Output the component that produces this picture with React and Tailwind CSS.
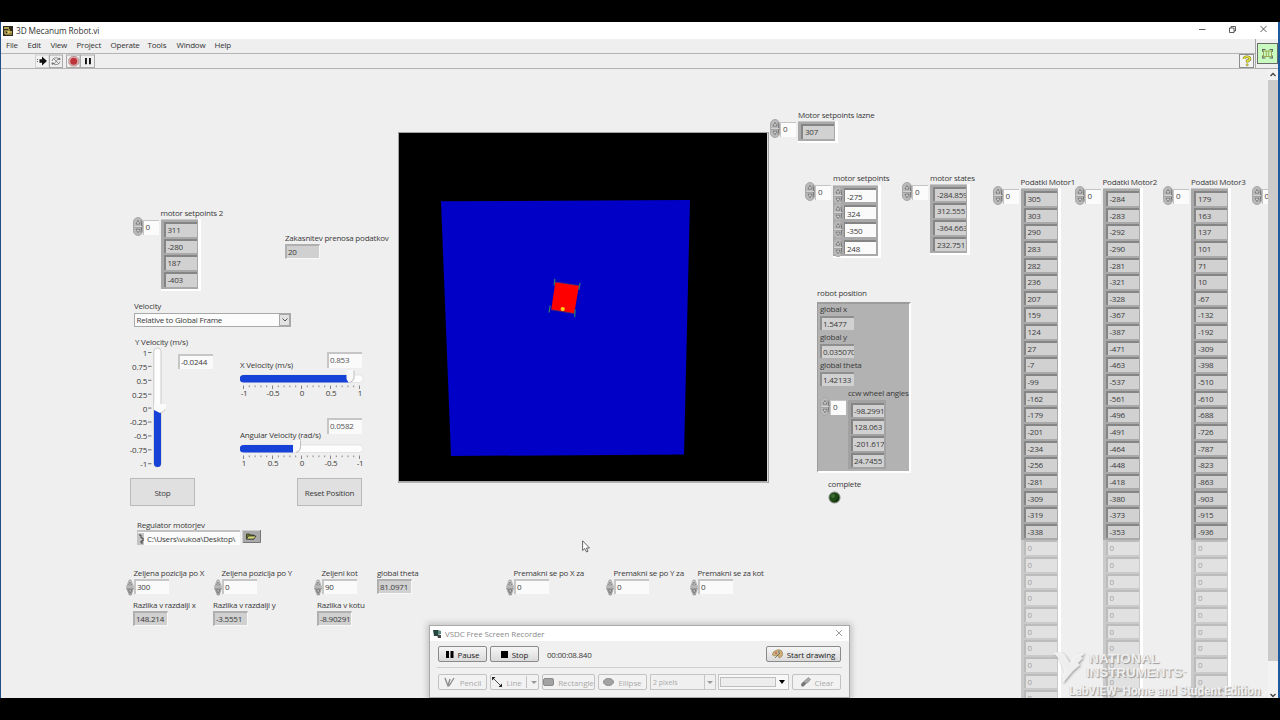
import React from 'react';

const MOTOR1 = ['305', '303', '290', '283', '282', '236', '207', '159', '124', '27', '-7', '-99', '-162', '-179', '-201', '-234', '-256', '-281', '-309', '-319', '-338'];
const MOTOR2 = ['-284', '-283', '-292', '-290', '-281', '-321', '-328', '-367', '-387', '-471', '-463', '-537', '-561', '-496', '-491', '-464', '-448', '-418', '-380', '-373', '-353'];
const MOTOR3 = ['179', '163', '137', '101', '71', '10', '-67', '-132', '-192', '-309', '-398', '-510', '-610', '-688', '-726', '-787', '-823', '-863', '-903', '-915', '-936'];

const Label = ({ children, className = '' }) => (
  <div className={`h-2.5 leading-[10px] whitespace-nowrap ${className}`}>{children}</div>
);

const Oval = ({ className = '' }) => (
  <svg width="10" height="19" viewBox="0 0 10 19" className={`shrink-0 ${className}`}>
    <rect x="0.5" y="0.5" width="9" height="18" rx="4.5" fill="#b9b9b9" stroke="#a8a8a8" />
    <path d="M8 3.5Q9.5 9 8 15.5" stroke="#777" strokeWidth="1" fill="none" />
    <path d="M1 9.5H9" stroke="#e6e6e6" />
    <path d="M1 10.2H9" stroke="#858585" strokeWidth="0.6" />
    <path d="M3 7L5 3.5L7 7Z" fill="#e4e4e4" stroke="#5c5c5c" strokeWidth="0.7" />
    <path d="M3 12.2L5 15.7L7 12.2Z" fill="#e4e4e4" stroke="#5c5c5c" strokeWidth="0.7" />
  </svg>
);

const Arrows = () => (
  <svg width="8" height="17" viewBox="0 0 8 17" className="shrink-0">
    <path d="M0.5 8L3.2 1H5L7.5 8Z" fill="#c9c9c9" stroke="#999" strokeWidth="0.7" />
    <path d="M2.6 6L4 3L5.6 6Z" fill="#eee" stroke="#666" strokeWidth="0.7" />
    <path d="M0.5 9H7.5L5.2 16H3.4Z" fill="#a9a9a9" stroke="#888" strokeWidth="0.7" />
    <path d="M2.4 10.8H5.8L4.2 14Z" fill="#d8d8d8" stroke="#5c5c5c" strokeWidth="0.7" />
  </svg>
);

const Index = ({ className = '' }) => (
  <div className={`flex shrink-0 ${className}`}>
    <Oval />
    <div className="mt-[3px] h-[15px] w-[16px] border-t border-l border-[#c4c4c4] bg-[#fbfbfb] pl-[2px] leading-[12px] text-[#444]">0</div>
  </div>
);

const Box = ({ children, gray, className = '' }) => (
  <div
    className={`h-[15px] w-[35px] overflow-hidden border-t-2 border-l-2 pl-px whitespace-nowrap ${
      gray ? 'border-[#b0b0b0] border-r border-b border-r-[#f8f8f8] border-b-[#f8f8f8] bg-[#d0d0d0] leading-[12px]' : 'border-[#c6c6c6] bg-[#fafafa] leading-[11px]'
    } ${className}`}
  >
    {children}
  </div>
);

const ArrayBox = ({ values, zeros = 0 }) => (
  <div className="w-10 shrink-0 border-r-[3px] border-white">
    <div className="border-t border-[#c8c8c8] bg-[#a9a9a9] pt-[2px] pr-[1px] pl-[3px]">
      {values.map((v, i) => (
        <div key={i} className="h-[16.65px]">
          <div className="h-[14.6px] overflow-hidden border-t-2 border-l-2 border-[#858585] bg-[#d1d1d1] pl-[2px] leading-[12px] text-[#3c3c3c]">{v}</div>
        </div>
      ))}
    </div>
    {zeros === 0 && <div className="-mr-[3px] h-[2px] bg-white" />}
    {zeros > 0 && (
      <div className="bg-[#cacaca] pr-[1px] pl-[3px]">
        {Array.from({ length: zeros }, (_, i) => (
          <div key={i} className="h-[16.65px]">
            <div className="h-[14.6px] border-t-2 border-l-2 border-[#bcbcbc] bg-[#e1e1e1] pl-[2px] leading-[12px] text-[#a2a2a2]">0</div>
          </div>
        ))}
      </div>
    )}
  </div>
);

const ArrayGroup = ({ label, values, zeros, className = '' }) => (
  <div className={`shrink-0 ${className}`}>
    <Label className="pl-[28px]">{label}</Label>
    <div className="flex">
      <Index className="-mt-px w-[28px]" />
      <div className="mt-[1px]">
        <ArrayBox values={values} zeros={zeros} />
      </div>
    </div>
  </div>
);

const Control = ({ label, value, className = '' }) => (
  <div className={`w-[43px] shrink-0 ${className}`}>
    <Label className="pl-[7.5px]">{label}</Label>
    <div className="mt-px flex">
      <Arrows />
      <Box>{value}</Box>
    </div>
  </div>
);

const Indicator = ({ label, value, className = '' }) => (
  <div className={`w-[35px] shrink-0 ${className}`}>
    <Label>{label}</Label>
    <Box gray className="mt-px">{value}</Box>
  </div>
);

const HSlider = ({ label, value, fill, thumb, ticks, boxClass = '', className = '' }) => (
  <div className={`w-[124px] ${className}`}>
    <div className="flex h-[18px]">
      <Label className="mt-[8px] w-[87px] shrink-0">{label}</Label>
      <Box className={`h-[16px] border-[#bdbdbd] bg-[#f5f5f5] text-[#555] ${boxClass}`}>{value}</Box>
    </div>
    <svg width="124" height="20" viewBox="0 0 124 20" className="block">
      <rect x="0" y="5" width="123" height="7.5" rx="3.5" fill="#fdfdfd" stroke="#d8d8d8" strokeWidth="0.6" />
      <path d={`M3.5 5H${fill}V12.5H3.5A3.5 3.5 0 0 1 3.5 5Z`} fill="#1742d8" />
      <path d={`M${thumb} 0H${thumb + 8}V8Q${thumb + 7} 12.5 ${thumb + 2} 12.5L${thumb} 9Z`} fill="#f8f8f8" />
      <path d={`M${thumb + 7.5} 0.5V8Q${thumb + 6.5} 12 ${thumb + 3} 12.5`} fill="none" stroke="#bdbdbd" strokeWidth="1" />
      {Array.from({ length: 21 }, (_, i) => (
        <path key={i} d={`M${3.5 + i * 5.8} 15.5V${i % 5 === 0 ? 19 : 17.2}`} stroke="#6a6a6a" strokeWidth="0.8" />
      ))}
    </svg>
    <div className="-mt-[2px] ml-[4px] flex h-[12px] w-[116px] justify-between">
      {ticks.map((t) => (
        <div key={t} className="flex w-0 justify-center leading-[10px]">{t}</div>
      ))}
    </div>
  </div>
);

const RecButton = ({ children, off, className = '' }) => (
  <div
    className={`flex h-4 items-center justify-center gap-1 rounded-[2px] border ${
      off ? 'border-[#c2c2c2] bg-[#f2f2f2] text-[#ababab]' : 'border-[#8a8a8a] bg-linear-to-b from-[#f6f6f6] to-[#dadada] text-[#222]'
    } ${className}`}
  >
    {children}
  </div>
);

function TitleBar() {
  return (
    <div className="flex h-[17px] items-center bg-white pl-[2px] text-[#333]">
      <svg width="10" height="10" viewBox="0 0 10 10">
        <rect width="10" height="10" fill="#2e2a1c" />
        <path d="M1 1H6V3H1ZM5 5H9V7H5Z" fill="#b3a04c" />
        <path d="M2 4V8H5V5H3M6 3V9M8 7V9" stroke="#f0dc6a" fill="none" />
      </svg>
      <span className="ml-[3px] text-[8.3px] leading-[10px] tracking-[-0.1px]">3D Mecanum Robot.vi</span>
      <svg width="72" height="10" viewBox="0 0 72 10" className="mr-[7px] mb-px ml-auto" fill="none" stroke="#333" strokeWidth="0.8">
        <path d="M0 4.5H6.5" />
        <path d="M30.5 3H35V7.5H30.5ZM32 3V1.5H36.5V6H35" />
        <path d="M61.5 1L67.5 7M67.5 1L61.5 7" />
      </svg>
    </div>
  );
}

function MenuAndToolbar() {
  return (
    <div className="flex h-[30px] bg-[#efefef]">
      <div className="flex-1">
        <div className="flex h-[14px] text-[#333]">
          <span className="w-[21.5px] pl-[5px]">File</span>
          <span className="ml-[5px] w-[23px]">Edit</span>
          <span className="w-[26px]">View</span>
          <span className="w-[34px]">Project</span>
          <span className="w-[37px]">Operate</span>
          <span className="w-[29px]">Tools</span>
          <span className="w-[38px]">Window</span>
          <span>Help</span>
        </div>
        <div className="flex h-4 items-center border-t border-b border-[#b4b4b4]">
          <svg width="62" height="15" viewBox="0 0 62 15" className="ml-[34px]">
            <rect x="0.5" y="1" width="13.5" height="12.5" fill="#f2f2f2" stroke="#d0d0d0" />
            <rect x="14.5" y="1" width="13" height="12.5" fill="#efefef" stroke="#aaa" />
            <rect x="31.5" y="1" width="13.5" height="12.5" fill="#efefef" stroke="#aaa" />
            <rect x="45.5" y="1" width="14" height="12.5" fill="#efefef" stroke="#aaa" />
            <path d="M4.5 5.3H7V2.5L12 7L7 11.5V8.7H4.5Z" fill="#111" />
            <path d="M2.5 5V9" stroke="#666" strokeDasharray="1 1" />
            <path d="M17 7A4 3.6 0 0 1 24 5M25 7.5A4 3.6 0 0 1 18 9.5M18.5 4.5L24 10M19 10L23.5 4.5" stroke="#777" fill="none" strokeWidth="0.8" />
            <path d="M22.5 5.5L25.5 6L25 3.5ZM19.5 9L16.5 8.5L17 11Z" fill="#666" />
            <path d="M36.5 2.5H41L43.8 5V9.5L41 12H36.5L33.8 9.5V5Z" fill="#d8b0b0" stroke="#a77" strokeWidth="0.6" />
            <circle cx="38.7" cy="7.2" r="3.5" fill="#bf343a" />
            <path d="M50 4H51.9V10.2H50ZM54 4H55.9V10.2H54Z" fill="#111" />
          </svg>
          <div className="mr-[1px] ml-auto h-[14px] w-[15px] border border-[#8d8d8d] bg-[#f4f4f4]">
            <svg width="10" height="12" viewBox="0 0 10 12" className="mx-auto block">
              <path d="M2 4Q2 1.8 5 1.8T8 4Q8 5.2 5.2 5.8V7.5" fill="none" stroke="#6b6b20" strokeWidth="2.6" />
              <path d="M2 4Q2 1.8 5 1.8T8 4Q8 5.2 5.2 5.8V7.5" fill="none" stroke="#e8e23c" strokeWidth="1.6" />
              <circle cx="5.2" cy="9.8" r="1.1" fill="#e8e23c" stroke="#6b6b20" strokeWidth="0.5" />
            </svg>
          </div>
        </div>
      </div>
      <div className="w-[23px] border-b border-l border-[#a8a8a8] pt-[4px] pl-px">
        <svg width="21" height="21" viewBox="0 0 21 21" className="block">
          <rect x="0.5" y="0.5" width="20" height="20" fill="#c9fac0" stroke="#6a6a6a" />
          <path d="M6.5 8H14.5V13.5H6.5ZM9.3 8V13.5M11.7 8V13.5" fill="none" stroke="#97a447" strokeWidth="0.9" />
          <path d="M5 6.5H8.5M5 15H8.5M12.5 6.5H16M12.5 15H16M5.7 6.5V9M5.7 12.5V15M15.3 6.5V9M15.3 12.5V15" stroke="#555" strokeWidth="0.9" />
        </svg>
      </div>
    </div>
  );
}

function LeftControls() {
  return (
    <div className="w-[397px] shrink-0">
      <div className="flex h-[232px]">
        <ArrayGroup label="motor setpoints 2" values={['311', '-280', '187', '-403']} className="mt-[139px] ml-[131.5px] w-[68px]" />
        <Indicator label="Zakasnitev prenosa podatkov" value="20" className="mt-[164px] ml-[84.5px]" />
      </div>
      <div className="ml-[133px] w-[157px]">
        <Label>Velocity</Label>
        <div className="mt-[2px] flex h-[14px] border border-[#a9a9a9] bg-[#fcfcfc] pl-[1.5px] leading-[12px]">
          Relative to Global Frame
          <div className="ml-auto flex w-[11px] items-center justify-center border border-[#a8a8a8] bg-[#e2e2e2]">
            <svg width="6" height="4" viewBox="0 0 6 4"><path d="M0.5 0.5L3 3L5.5 0.5" fill="none" stroke="#444" strokeWidth="0.9" /></svg>
          </div>
        </div>
      </div>
      <div className="mt-[10px] ml-[128px] flex h-[141px]">
        <div className="w-[86px]">
          <Label className="pl-[6px]">Y Velocity (m/s)</Label>
          <div className="flex">
            <div className="w-[18px] text-right">
              {['1', '0.75', '0.5', '0.25', '0', '-0.25', '-0.5', '-0.75', '-1'].map((t) => (
                <div key={t} className="flex h-[13.9px] justify-end leading-[11px] whitespace-nowrap">{t}</div>
              ))}
            </div>
            <svg width="20" height="122" viewBox="0 0 20 122" className="shrink-0">
              {Array.from({ length: 9 }, (_, i) => (
                <path key={i} d={`M1 ${5.5 + i * 13.9}H4.5`} stroke="#666" strokeWidth="0.9" />
              ))}
              <rect x="6.8" y="1" width="7.2" height="119" rx="3.6" fill="#fdfdfd" stroke="#b9b9b9" strokeWidth="0.7" />
              <path d="M7 62H14V116.5A3.5 3.5 0 0 1 7 116.5Z" fill="#1742d8" />
              <path d="M7 57H19V62Q17 66 13 66L7 63Z" fill="#fafafa" />
              <path d="M18.5 62Q17 65.5 13 65.8" stroke="#c5c5c5" fill="none" />
            </svg>
            <Box className="mt-[7px] ml-[11px] shrink-0">-0.0244</Box>
          </div>
        </div>
        <div className="ml-[25px] pt-[15px]">
          <HSlider label="X Velocity (m/s)" value="0.853" fill={109} thumb={106.5} ticks={['-1', '-0.5', '0', '0.5', '1']} />
          <HSlider label="Angular Velocity (rad/s)" value="0.0582" fill={53} thumb={53} ticks={['1', '0.5', '0', '-0.5', '-1']} boxClass="-mt-[4px]" className="mt-[22px]" />
        </div>
      </div>
      <div className="ml-[129px] flex w-[232px] justify-between">
        <div className="flex h-7 w-[65px] items-center justify-center border border-[#b9b9b9] bg-[#e0e0e0]">Stop</div>
        <div className="flex h-7 w-[65px] items-center justify-center border border-[#b9b9b9] bg-[#e0e0e0]">Reset Position</div>
      </div>
      <div className="mt-[13.5px] ml-[136px]">
        <Label>Regulator motorjev</Label>
        <div className="mt-[0.5px] flex">
          <div className="flex h-[15px] w-[103px] items-center border-t-2 border-l border-[#c2c2c2] bg-[#fbfbfb]">
            <svg width="6" height="12" viewBox="0 0 6 12" className="mr-[3px] bg-[#c4c4c4]"><path d="M1 2H3V5H5V8H3M3 8V10H5" fill="none" stroke="#333" strokeWidth="0.9" /></svg>
            C:\Users\vukoa\Desktop\
          </div>
          <svg width="19" height="13" viewBox="0 0 19 13" className="-mt-[0.5px] ml-[2px]">
            <rect x="0.5" y="0.5" width="18" height="12" fill="#a9a9a9" stroke="#cfcfcf" />
            <path d="M18.5 0V12.5H1" fill="none" stroke="#777" />
            <path d="M4.5 9V4H7.5L8.5 5H12V9Z" fill="#6f7424" stroke="#222" strokeWidth="0.7" />
            <path d="M4.5 9L6.5 6H14L12 9Z" fill="#d4d976" stroke="#222" strokeWidth="0.7" />
          </svg>
        </div>
      </div>
    </div>
  );
}

function Scene() {
  return (
    <svg width="371" height="351" viewBox="398 132 371 351" className="mt-[63px] shrink-0">
      <rect x="398" y="132" width="371" height="351" fill="#a3a3a3" />
      <rect x="399" y="133" width="368" height="348.5" fill="#000" />
      <path d="M767.5 133V481.8H399" fill="none" stroke="#e8e8e8" strokeWidth="0.8" />
      <path d="M441 201.3L690 200L684 454.5L451 456Z" fill="#0000c6" />
      <path d="M555.3 282.3L579 285.7L574.2 313.4L551.3 309.5Z" fill="#fe0000" />
      <path d="M555 282L579.5 285.7M551 309.7L574.5 313.5" stroke="#6a3a50" strokeWidth="0.7" />
      <path d="M554.8 278.8L554.2 285.5M580.2 282.8L578.8 290M550.2 305.5L549 312.6M575.2 309.5L574.6 317" stroke="#2f7f68" strokeWidth="1.2" />
      <circle cx="562.7" cy="309" r="2.1" fill="#ffd21a" />
    </svg>
  );
}

function BottomControls() {
  return (
    <div className="h-[76px]">
      <div className="flex pl-[125px]">
        <Control label="Zeljena pozicija po X" value="300" />
        <Control label="Zeljena pozicija po Y" value="0" className="ml-[45px]" />
        <Control label="Zeljeni kot" value="90" className="ml-[57px]" />
        <Indicator label="global theta" value="81.0971" className="ml-[20px]" />
        <Control label="Premakni se po X za" value="0" className="ml-[94px]" />
        <Control label="Premakni se po Y za" value="0" className="ml-[57px]" />
        <Control label="Premakni se za kot" value="0" className="ml-[41px]" />
      </div>
      <div className="mt-[4px] flex pl-[132px]">
        <Indicator label="Razlika v razdalji x" value="148.214" />
        <Indicator label="Razlika v razdalji y" value="-3.5551" className="ml-[45px]" />
        <Indicator label="Razlika v kotu" value="-8.90291" className="ml-[69px]" />
      </div>
    </div>
  );
}

function MiddleColumn() {
  return (
    <div className="w-[222px] shrink-0 pt-[41px] pl-[1px]">
      <ArrayGroup label="Motor setpoints lazne" values={['307']} />
      <div className="mt-[30px] flex pl-[35px]">
        <div className="w-[97px]">
          <Label className="pl-[28px]">motor setpoints</Label>
          <div className="flex">
            <Index className="-mt-px w-[28px]" />
            <div className="mt-[2px] w-[48px] border-r-[3px] border-b-2 border-white">
              <div className="border-t border-[#c8c8c8] bg-[#a9a9a9] pt-px">
                {['-275', '324', '-350', '248'].map((v) => (
                  <div key={v} className="flex h-[17.3px]">
                    <Oval className="-mt-px" />
                    <div className="mt-[1px] ml-px h-[14.5px] w-[32px] border-t-2 border-l border-[#858585] bg-[#fafafa] pl-[2px] leading-[13px]">{v}</div>
                  </div>
                ))}
              </div>
            </div>
          </div>
        </div>
        <ArrayGroup label="motor states" values={['-284.859', '312.555', '-364.663', '232.751']} />
      </div>
      <div className="mt-[30px] ml-[47px] w-[94px]">
        <Label>robot position</Label>
        <div className="mt-[4px] h-[171px] border-t-2 border-r-2 border-b-2 border-l border-t-[#9c9c9c] border-r-white border-b-white border-l-[#9c9c9c] bg-[#b2b2b2] pl-[2px]">
          {[['global x', '1.5477'], ['global y', '0.035070'], ['global theta', '1.42133']].map(([l, v]) => (
            <div key={l} className="h-[28px]">
              <Label>{l}</Label>
              <div className="mt-[2px] h-[14px] w-[34px] overflow-hidden border-t-2 border-l-2 border-[#8f8f8f] bg-[#d1d1d1] pl-px leading-[11px]">{v}</div>
            </div>
          ))}
          <Label className="pl-[28px]">ccw wheel angles</Label>
          <div className="flex">
            <Index className="-mt-px w-[28px]" />
            <div className="mt-[2px] w-[38px] bg-[#a2a2a2] pt-[3px] pr-[2px] pl-[3px]">
              {['-98.2991', '128.063', '-201.617', '24.7455'].map((v) => (
                <div key={v} className="h-[16.6px]">
                  <div className="h-[14.6px] overflow-hidden border-t-2 border-l-2 border-[#858585] bg-[#d1d1d1] pl-px leading-[12px] whitespace-nowrap">{v}</div>
                </div>
              ))}
            </div>
          </div>
        </div>
      </div>
      <Label className="mt-[6px] ml-[58px]">complete</Label>
      <svg width="13" height="13" viewBox="0 0 13 13" className="mt-[2px] ml-[58px] block">
        <circle cx="6.5" cy="6.5" r="5.6" fill="#1d4a15" stroke="#9a9a9a" />
        <circle cx="5" cy="5" r="2" fill="#3d6d34" />
        <path d="M10.5 4A5 5 0 0 1 5 11Q10 10 10.5 4Z" fill="#0d2a08" />
      </svg>
    </div>
  );
}

function Watermark() {
  return (
    <div className="absolute top-[648px] left-[1053px] w-[216px] font-bold tracking-normal text-[#f6f6f6]/90 [text-shadow:1px_1px_1px_#9a9a9a,-0.5px_-0.5px_0_#d8d8d8]">
      <div className="flex">
        <svg width="32" height="36" viewBox="0 0 32 36" className="overflow-visible drop-shadow-[1px_1px_1px_#999]">
          <path d="M0 5Q8 3 12 7L17 15L19 10Q22 5 32 5L28 9L30 10L25 15L27 17L20 23L10 35L9 28Q13 24 7 14Q5 8 0 5Z" fill="#f6f6f6" fillOpacity="0.9" />
        </svg>
        <div className="pt-[4px] pl-px font-['Liberation_Sans'] text-[13.5px] leading-[14px]">
          <div className="pl-[3px] tracking-[0.2px]">NATIONAL</div>
          <div className="tracking-[-0.1px]">INSTRUMENTS<span className="align-top text-[4px]">™</span></div>
        </div>
      </div>
      <div className="pl-[16px] font-['Roboto'] text-[12px] leading-[14px] tracking-[-0.1px] whitespace-nowrap">LabVIEW<span className="align-top text-[5px]">™</span> Home and Student Edition</div>
    </div>
  );
}

function Recorder() {
  return (
    <div className="absolute top-[625px] left-[429px] h-[73px] w-[421px] border border-[#a9a9a9] bg-[#f0f0f0] tracking-[-0.1px] shadow-[0_0_6px_2px_rgba(0,0,0,0.18)]">
      <div className="flex h-[15px] items-center bg-white pr-[6px] pl-[3px] text-[#8b8b8b]">
        <svg width="9" height="9" viewBox="0 0 9 9" className="mb-px"><path d="M0 1H5V7H1Z" fill="#25453f" /><path d="M5 1L8 2V5L5 6Z" fill="#5b8a7d" /><path d="M4 6H8V9H5Z" fill="#444" /></svg>
        <span className="mb-px ml-[3px] text-[8px]">VSDC Free Screen Recorder</span>
        <svg width="8" height="8" viewBox="0 0 8 8" className="mb-px ml-auto"><path d="M1 1L7 7M7 1L1 7" stroke="#888" strokeWidth="0.8" fill="none" /></svg>
      </div>
      <div className="mt-[5px] flex items-center px-2">
        <RecButton className="w-[49px]">
          <svg width="8" height="7" viewBox="0 0 8 7"><path d="M0 0H3V7H0ZM4.5 0H7.5V7H4.5Z" /></svg>Pause
        </RecButton>
        <RecButton className="ml-[3px] w-[49px]">
          <svg width="7" height="7" viewBox="0 0 7 7"><path d="M0 0H7V7H0Z" /></svg>Stop
        </RecButton>
        <span className="ml-[8px] tracking-[-0.25px]">00:00:08.840</span>
        <RecButton className="ml-auto w-[75px]">
          <svg width="11" height="10" viewBox="0 0 11 10"><path d="M5 1Q10 0 10.5 4T7 9L6 6Q0 8 0.5 5T5 1Z" fill="#d0b078" stroke="#8f7448" strokeWidth="0.6" /><circle cx="4" cy="4" r="0.9" fill="#a66" /><circle cx="7" cy="3" r="0.9" fill="#689" /><path d="M3 9L8 4" stroke="#664" strokeWidth="0.8" /></svg>Start drawing
        </RecButton>
      </div>
      <div className="mx-[7px] mt-[5px] h-px bg-[#cfcfcf]" />
      <div className="mt-[6px] flex gap-[3px] px-2">
        <RecButton off className="w-[49px]">
          <svg width="12" height="10" viewBox="0 0 12 10" fill="none" stroke="#8f8f8f"><path d="M1 1L4 9L6 2M5 9L10 1" strokeWidth="1.4" /></svg>Pencil
        </RecButton>
        <RecButton off className="w-[49px]">
          <svg width="10" height="10" viewBox="0 0 10 10"><path d="M1 1L9 9" stroke="#222" strokeWidth="0.8" /><path d="M0 0H3.5L0 3.5ZM10 10H6.5L10 6.5Z" fill="#222" /></svg>Line
          <span className="h-3 border-l border-[#c2c2c2]" />
          <svg width="6" height="3" viewBox="0 0 6 3"><path d="M0 0H6L3 3Z" fill="#999" /></svg>
        </RecButton>
        <RecButton off className="w-[53px]">
          <svg width="11" height="8" viewBox="0 0 11 8" className="shrink-0"><rect x="0.5" y="0.5" width="10" height="7" rx="1.5" fill="#a2a2a2" stroke="#8a8a8a" /></svg>Rectangle
        </RecButton>
        <RecButton off className="w-[49px]">
          <svg width="11" height="8" viewBox="0 0 11 8"><ellipse cx="5.5" cy="4" rx="5" ry="3.5" fill="#a2a2a2" stroke="#8a8a8a" /></svg>Ellipse
        </RecButton>
        <div className="flex h-4 w-[66px] items-center border border-[#c6c6c6] pl-[2px] text-[7px] tracking-normal text-[#ababab]">2 pixels
          <div className="ml-auto flex h-full w-[11px] items-center justify-center border-l border-[#c6c6c6]"><svg width="6" height="3" viewBox="0 0 6 3"><path d="M0 0H6L3 3Z" fill="#999" /></svg></div>
        </div>
        <div className="-ml-px flex h-4 w-[71px] items-center border border-[#c6c6c6] bg-[#f8f8f8] px-px">
          <div className="h-[10px] w-[56px] border border-[#bdbdbd] bg-[#ededed]" />
          <svg width="6" height="4" viewBox="0 0 6 4" className="ml-[3px]"><path d="M0 0H6L3 4Z" /></svg>
        </div>
        <RecButton off className="w-[49px]">
          <svg width="11" height="10" viewBox="0 0 11 10"><path d="M1 7L4 4L6.5 6.5L3.5 9.5H1.5Z" fill="#777" /><path d="M4.5 4L8.5 0.5L10.5 2.5L7 6.3Z" fill="#a9a9a9" stroke="#777" strokeWidth="0.6" /></svg>Clear
        </RecButton>
      </div>
    </div>
  );
}

export default function App() {
  return (
    <div className="relative h-[720px] w-[1280px] overflow-hidden bg-black pt-[22px] font-['Open_Sans','Noto_Sans',sans-serif] text-[8px] leading-[11px] tracking-[-0.22px] text-[#3a3a3a]">
      <div className="h-[676px] overflow-hidden border-r-2 border-l border-r-[#1d5a9c] border-l-[#24508a] bg-[#efefef]">
        <TitleBar />
        <MenuAndToolbar />
        <div className="flex h-[629px]">
          <div className="w-[768px] shrink-0">
            <div className="flex h-[499px]">
              <LeftControls />
              <Scene />
            </div>
            <BottomControls />
          </div>
          <MiddleColumn />
          <div className="flex min-w-0 flex-1 overflow-hidden pt-[108px] pl-[1.5px]">
            <ArrayGroup label="Podatki Motor1" values={MOTOR1} zeros={10} className="w-[68px]" />
            <ArrayGroup label="Podatki Motor2" values={MOTOR2} zeros={10} className="ml-[14px] w-[68px]" />
            <ArrayGroup label="Podatki Motor3" values={MOTOR3} zeros={10} className="ml-[20.5px] w-[68px]" />
            <Index className="mt-[9px] ml-[20.5px]" />
          </div>
          <div className="flex w-[10px] shrink-0 flex-col items-center bg-[#f2f2f2]">
            <svg width="8" height="11" viewBox="0 0 8 11"><path d="M1.5 7L4 4.5L6.5 7" fill="none" stroke="#444" strokeWidth="1.4" /></svg>
            <div className="h-[581px] w-full bg-[#cbcbcb]" />
            <svg width="8" height="6" viewBox="0 0 8 6" className="mt-auto"><path d="M1.5 2L4 4.5L6.5 2" fill="none" stroke="#444" strokeWidth="1.4" /></svg>
          </div>
        </div>
      </div>
      <Watermark />
      <Recorder />
      <svg width="9" height="13" viewBox="0 0 9 13" className="absolute top-[540px] left-[582px]">
        <path d="M0.6 0.8V10.5L2.8 8.5L4.5 12L6 11.3L4.5 8H7.5Z" fill="#fff" stroke="#444" strokeWidth="0.8" />
      </svg>
    </div>
  );
}
